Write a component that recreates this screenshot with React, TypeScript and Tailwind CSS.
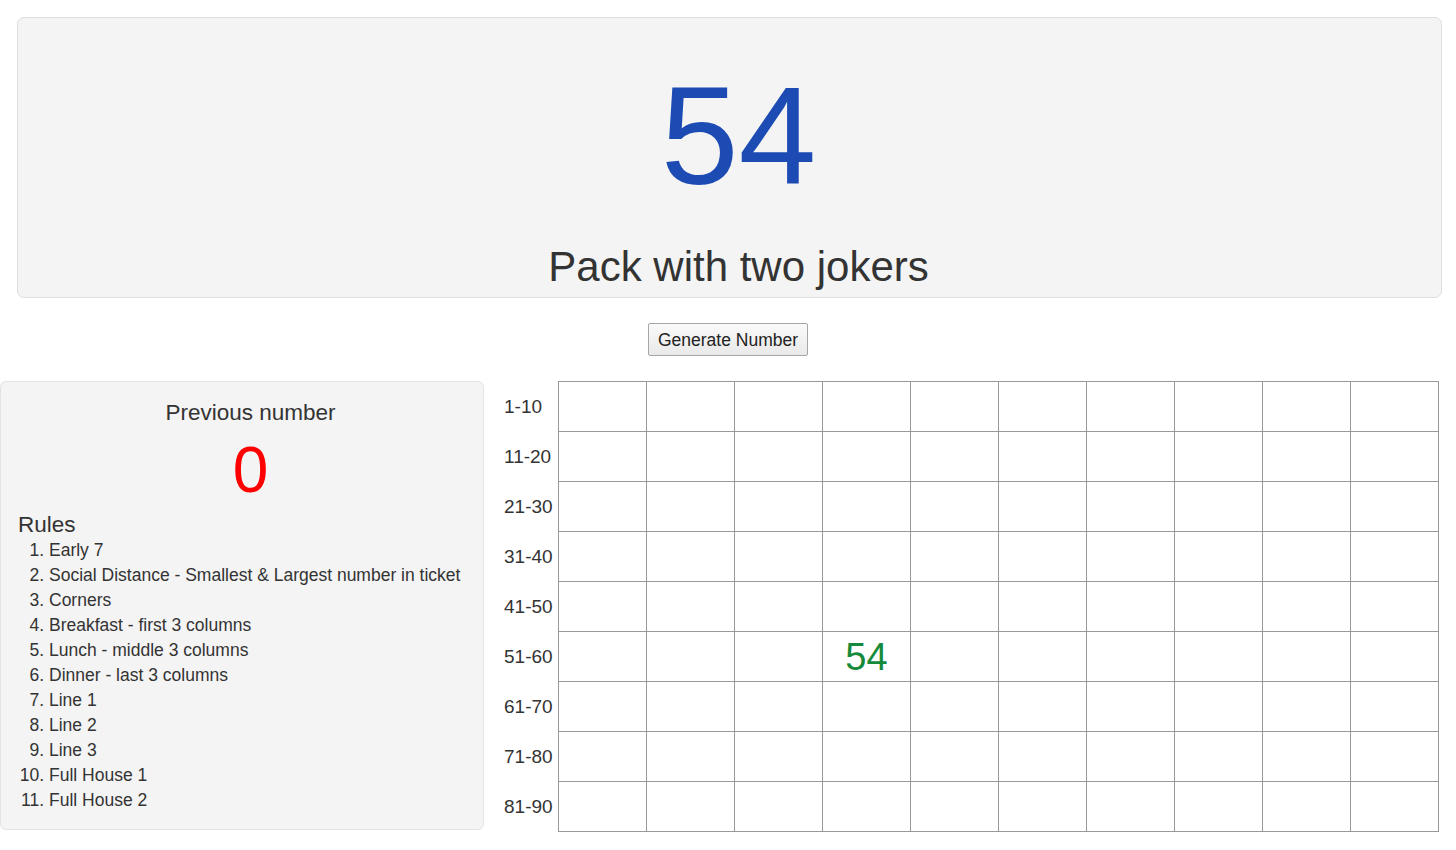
import React from "react";

const rules = [
  "Early 7",
  "Social Distance - Smallest & Largest number in ticket",
  "Corners",
  "Breakfast - first 3 columns",
  "Lunch - middle 3 columns",
  "Dinner - last 3 columns",
  "Line 1",
  "Line 2",
  "Line 3",
  "Full House 1",
  "Full House 2",
];

const ranges = ["1-10", "11-20", "21-30", "31-40", "41-50", "51-60", "61-70", "71-80", "81-90"];

export default function App() {
  const drawn = new Set([54]);
  return (
    <div
      className="w-[1456px] min-h-[850px] bg-white text-[#333333]"
      style={{ fontFamily: '"Liberation Sans", Arial, Helvetica, sans-serif' }}
    >
      {/* Jumbotron */}
      <div className="pt-[17px]">
        <div className="ml-[17px] w-[1425px] h-[281px] rounded-[7px] border border-[#dedede] bg-[#f4f4f4] flex flex-col items-center pl-[18px] pt-[48px]">
          <div className="text-[140px] leading-[140px] text-[#1c4bb4]">54</div>
          <div className="mt-[40px] text-[42px] leading-[42px] text-[#333333]">Pack with two jokers</div>
        </div>
      </div>

      {/* Button */}
      <div className="flex justify-center mt-[25px]">
        <button className="w-[160px] h-[33px] rounded-[2px] border border-[#a6a6a6] bg-gradient-to-b from-[#fafafa] to-[#e9e9e9] text-[17.5px] leading-[20px] text-[#222222]">
          Generate Number
        </button>
      </div>

      {/* Main row */}
      <div className="flex mt-[25px]">
        <div className="w-[484px] h-[449px] rounded-[6px] border border-[#e3e3e3] bg-[#f4f4f4] pl-[17px] pt-[18px]">
          <div className="text-center text-[22.5px] leading-[25px]">Previous number</div>
          <div className="text-center mt-[13px] text-[64px] leading-[64px] text-[#ff0000]">0</div>
          <div className="mt-[10px] text-[22.5px] leading-[25px]">Rules</div>
          <ol className="mt-[1px] pl-[31px] list-decimal text-[17.5px] leading-[25px]">
            {rules.map((r) => (
              <li key={r}>{r}</li>
            ))}
          </ol>
        </div>

        <div className="flex pl-[20px]">
          <div className="w-[54px] flex flex-col">
            {ranges.map((r) => (
              <div key={r} className="h-[50px] flex items-center pt-[2px] text-[19px] leading-[20px]">
                {r}
              </div>
            ))}
          </div>
          <div className="grid grid-cols-[repeat(10,88px)] border-r border-b border-[#999999] self-start">
            {Array.from({ length: 90 }, (_, i) => {
              const n = i + 1;
              return (
                <div
                  key={n}
                  className="h-[50px] border-l border-t border-[#999999] flex items-center justify-center text-[38px] leading-[40px] text-[#168a3a]"
                >
                  {drawn.has(n) ? n : ""}
                </div>
              );
            })}
          </div>
        </div>
      </div>
    </div>
  );
}
